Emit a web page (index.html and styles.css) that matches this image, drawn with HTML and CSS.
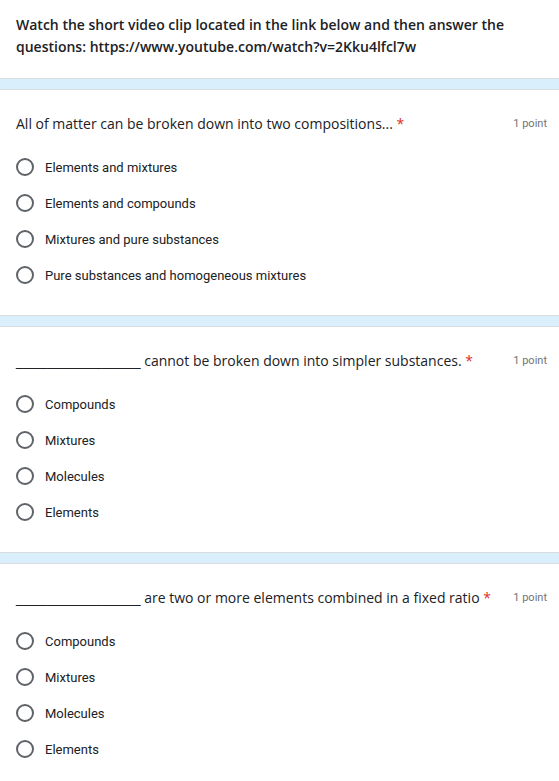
FILE: index.html
```html
<!DOCTYPE html>
<html lang="en">
<head>
  <meta charset="UTF-8">
  <title>Quiz</title>
  <link rel="stylesheet" href="styles.css">
</head>
<body>
  <div class="intro">
    Watch the short video clip located in the link below and then answer the questions: https://www.youtube.com/watch?v=2Kku4lfcl7w
  </div>

  <div class="band"></div>
  <div class="question">
    <div class="q-head">
      <div class="q-title">All of matter can be broken down into two compositions... <span class="req">*</span></div>
      <div class="points">1 point</div>
    </div>
    <ul class="options">
      <li><span class="radio"></span>Elements and mixtures</li>
      <li><span class="radio"></span>Elements and compounds</li>
      <li><span class="radio"></span>Mixtures and pure substances</li>
      <li><span class="radio"></span>Pure substances and homogeneous mixtures</li>
    </ul>
  </div>

  <div class="band"></div>
  <div class="question">
    <div class="q-head">
      <div class="q-title"><span class="blank">________________</span> cannot be broken down into simpler substances. <span class="req">*</span></div>
      <div class="points">1 point</div>
    </div>
    <ul class="options">
      <li><span class="radio"></span>Compounds</li>
      <li><span class="radio"></span>Mixtures</li>
      <li><span class="radio"></span>Molecules</li>
      <li><span class="radio"></span>Elements</li>
    </ul>
  </div>

  <div class="band"></div>
  <div class="question">
    <div class="q-head">
      <div class="q-title"><span class="blank">________________</span> are two or more elements combined in a fixed ratio <span class="req">*</span></div>
      <div class="points">1 point</div>
    </div>
    <ul class="options">
      <li><span class="radio"></span>Compounds</li>
      <li><span class="radio"></span>Mixtures</li>
      <li><span class="radio"></span>Molecules</li>
      <li><span class="radio"></span>Elements</li>
    </ul>
  </div>
</body>
</html>
```

FILE: styles.css
```css
body {
  margin: 0;
  background: #fff;
  color: #202124;
  font-family: Roboto, "Liberation Sans", sans-serif;
}
.intro {
  padding: 14px 40px 20px 16px;
  font-family: "Open Sans", "Liberation Sans", sans-serif;
  font-size: 14px;
  font-weight: 600;
  line-height: 22px;
}
.band {
  height: 10px;
  background: #d9f0fc;
  border-top: 1px solid #dadce0;
  border-bottom: 1px solid #dadce0;
}
.question {
  padding: 24px 12px 22px 16px;
}
.q-head {
  display: flex;
  align-items: flex-start;
  justify-content: space-between;
  gap: 16px;
}
.q-title {
  font-family: "Open Sans", "Liberation Sans", sans-serif;
  font-size: 14px;
  line-height: 20px;
}
.blank {
  font-family: "Liberation Sans", sans-serif;
}
.req {
  color: #d93025;
}
.points {
  font-size: 11px;
  color: #70757a;
  line-height: 20px;
  white-space: nowrap;
}
.options {
  list-style: none;
  margin: 15px 0 0;
  padding: 0;
}
.options li {
  display: flex;
  align-items: center;
  height: 36px;
  font-size: 13px;
}
.radio {
  width: 14px;
  height: 14px;
  border: 2px solid #5f6368;
  border-radius: 50%;
  margin: 0 11px 0 0;
}
```
